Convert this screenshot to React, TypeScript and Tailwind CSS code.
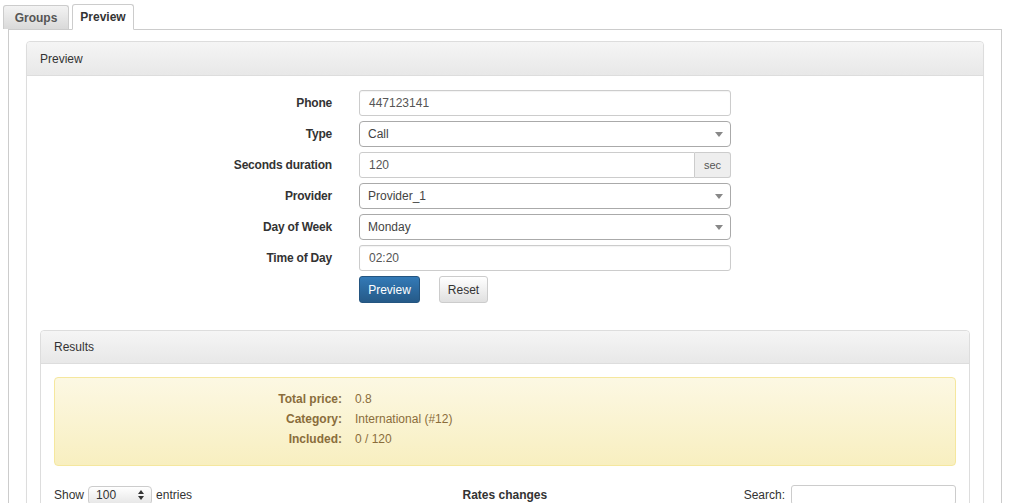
import React from "react";

const font = { fontFamily: '"Liberation Sans", Arial, sans-serif' };

function Caret() {
  return (
    <svg width="8" height="5" viewBox="0 0 8 5" className="shrink-0">
      <path d="M0 0h8L4 5z" fill="#888" />
    </svg>
  );
}

function Row({ label, children }: { label: string; children: React.ReactNode }) {
  return (
    <div className="flex items-center h-[26px]">
      <label className="w-[319px] pr-[27px] text-right font-bold text-[12px] tracking-[-0.2px] text-[#333]">{label}</label>
      <div className="w-[372px]">{children}</div>
    </div>
  );
}

function TextBox({ value }: { value: string }) {
  return (
    <div className="h-[26px] border border-[#ccc] rounded-[3px] bg-white flex items-center px-[9px] text-[12px] text-[#555] shadow-[inset_0_1px_1px_rgba(0,0,0,0.05)]">
      {value}
    </div>
  );
}

function SelectBox({ value }: { value: string }) {
  return (
    <div className="h-[26px] border border-[#aaa] rounded-[4px] bg-white flex items-center justify-between pl-[8px] pr-[7px] text-[12px] text-[#444]">
      <span>{value}</span>
      <Caret />
    </div>
  );
}

export default function App() {
  return (
    <div style={font} className="h-[503px] overflow-hidden bg-white text-[#333] text-[12px]">
      {/* tabs */}
      <div className="flex items-end pl-[3px] pt-[3px] h-[29px] relative">
        <div className="h-[24px] w-[66px] mr-[3px] flex items-center justify-center font-bold text-[#555] border border-[#ccc] border-b-0 rounded-t-[3px] bg-gradient-to-b from-[#f3f3f3] to-[#d9d9d9] relative z-10">
          Groups
        </div>
        <div className="h-[26px] w-[62px] flex items-center justify-center font-bold text-[#333] border border-[#ccc] border-b-white rounded-t-[3px] bg-white relative z-10 -mb-px">
          Preview
        </div>
      </div>
      <div className="ml-[8px] w-[994px] border border-[#ccc] px-[17px] pt-[11px] h-[600px]">
        {/* outer panel */}
        <div className="border border-[#ddd] rounded-[4px] shadow-[0_1px_1px_rgba(0,0,0,0.05)]">
          <div className="h-[34px] flex items-center pl-[13px] bg-gradient-to-b from-[#f5f5f5] to-[#e8e8e8] border-b border-[#ddd] rounded-t-[4px] text-[#333]">
            Preview
          </div>
          <div className="pt-[14px] px-[13px]">
            <div className="flex flex-col gap-[5px]">
              <Row label="Phone"><TextBox value="447123141" /></Row>
              <Row label="Type"><SelectBox value="Call" /></Row>
              <Row label="Seconds duration">
                <div className="h-[26px] flex text-[12px]">
                  <div className="flex-1 border border-[#ccc] rounded-l-[3px] flex items-center px-[9px] text-[#555]">120</div>
                  <div className="w-[36px] border border-l-0 border-[#ccc] rounded-r-[3px] bg-[#eee] flex items-center justify-center text-[#555] text-[11px]">sec</div>
                </div>
              </Row>
              <Row label="Provider"><SelectBox value="Provider_1" /></Row>
              <Row label="Day of Week"><SelectBox value="Monday" /></Row>
              <Row label="Time of Day"><TextBox value="02:20" /></Row>
            </div>
            <div className="flex pl-[319px] mt-[5px] gap-[19px]">
              <button className="h-[27px] w-[61px] rounded-[3px] text-white text-[12px] border border-[#245580] bg-gradient-to-b from-[#337ab7] to-[#265a88]">
                Preview
              </button>
              <button className="h-[27px] w-[49px] rounded-[3px] text-[#333] text-[12px] border border-[#ccc] bg-gradient-to-b from-white to-[#e0e0e0]">
                Reset
              </button>
            </div>

            {/* results */}
            <div className="mt-[27px] border border-[#ddd] rounded-[4px] h-[200px]">
              <div className="h-[33px] flex items-center pl-[13px] bg-gradient-to-b from-[#f5f5f5] to-[#e8e8e8] border-b border-[#ddd] rounded-t-[4px]">
                Results
              </div>
              <div className="px-[13px] pt-[13px]">
                <div className="h-[89px] border border-[#f5e79e] rounded-[4px] bg-gradient-to-b from-[#fcf8e3] to-[#f8efc0] text-[#8a6d3b] pt-[13px] flex flex-col gap-[4px]">
                  {[
                    ["Total price:", "0.8"],
                    ["Category:", "International (#12)"],
                    ["Included:", "0 / 120"],
                  ].map(([k, v]) => (
                    <div key={k} className="flex h-[16px] items-center">
                      <span className="w-[287px] text-right font-bold">{k}</span>
                      <span className="pl-[13px]">{v}</span>
                    </div>
                  ))}
                </div>
                <div className="flex items-center justify-between mt-[19px] h-[20px]">
                  <div className="flex items-center gap-[4px] text-[#333]">
                    <span>Show</span>
                    <div className="h-[19px] w-[64px] rounded-[4px] border border-[#ccc] bg-gradient-to-b from-white to-[#e6e6e6] flex items-center justify-between px-[7px] text-[12px]">
                      <span>100</span>
                      <svg width="6" height="10" viewBox="0 0 6 10">
                        <path d="M0 4L3 0L6 4z M0 6L3 10L6 6z" fill="#333" />
                      </svg>
                    </div>
                    <span>entries</span>
                  </div>
                  <div className="font-bold text-[#333] pl-[74px]">Rates changes</div>
                  <div className="flex items-center gap-[6px]">
                    <span>Search:</span>
                    <div className="h-[20px] w-[165px] border border-[#ccc] rounded-[3px] bg-white" />
                  </div>
                </div>
              </div>
            </div>
          </div>
        </div>
      </div>
    </div>
  );
}
